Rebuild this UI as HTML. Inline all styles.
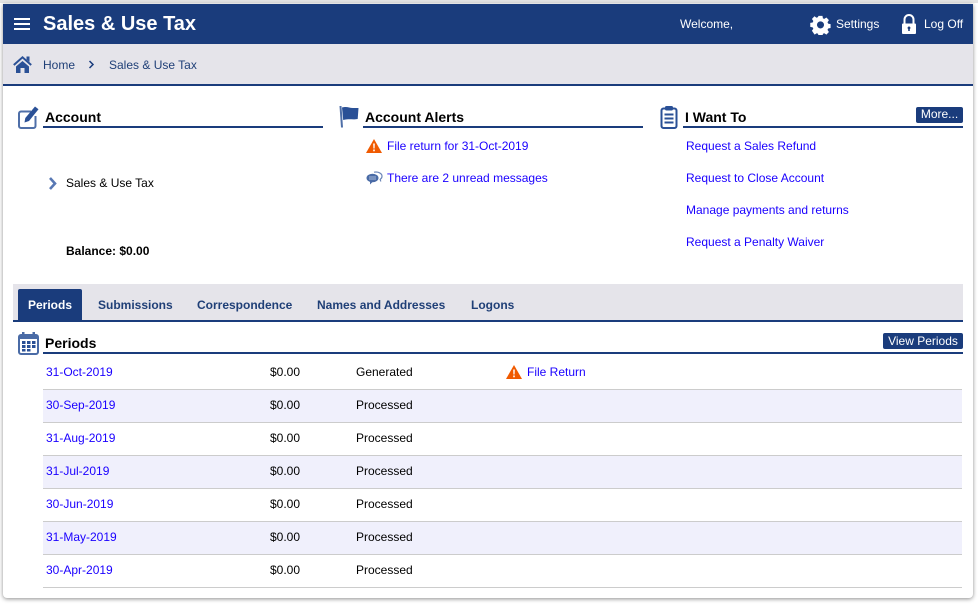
<!DOCTYPE html>
<html><head><meta charset="utf-8"><style>
html,body{margin:0;padding:0;width:978px;height:615px;overflow:hidden;background:#fff;font-family:"Liberation Sans",Arial,sans-serif;font-size:12px;color:#000}
.a{position:absolute;white-space:nowrap;line-height:14px}
a,.l{color:#1a00ff;text-decoration:none}
.b{position:absolute;background:#1a3c7c}
.h{font-size:14px;font-weight:bold;line-height:16px;position:absolute;white-space:nowrap}
.btn{position:absolute;background:#1a3c7c;color:#fff;border-radius:2px;line-height:16px;height:16px;text-align:center}
.row{position:absolute;left:43px;width:919px;height:32px;border-bottom:1px solid #ccc}
.tab{position:absolute;top:298px;font-weight:bold;color:#1f3f77;line-height:14px;white-space:nowrap}
svg{position:absolute}
</style></head><body>
<div style="position:absolute;left:0;top:0;width:978px;height:3px;background:#e4e4e4"></div>
<div style="position:absolute;left:3px;top:4px;width:970px;height:594px;background:#fff;border-radius:0 0 4px 4px;box-shadow:0 1px 4px rgba(0,0,0,.45)"></div>

<div class="b" style="left:3px;top:4px;width:970px;height:40px"></div>
<div style="position:absolute;left:3px;top:44px;width:970px;height:40px;background:#e5e4ea"></div>
<div class="b" style="left:3px;top:84px;width:970px;height:2px"></div>

<div style="position:absolute;left:14px;top:18px;width:16px;height:2px;background:#fff"></div>
<div style="position:absolute;left:14px;top:23px;width:16px;height:2px;background:#fff"></div>
<div style="position:absolute;left:14px;top:28px;width:16px;height:2px;background:#fff"></div>
<div class="a" style="left:43px;top:12px;font-size:20px;font-weight:bold;color:#fff;line-height:24px">Sales &amp; Use Tax</div>
<div class="a" style="left:680px;top:17px;color:#fff">Welcome,</div>
<svg style="left:810px;top:14px" width="21" height="21" viewBox="0 0 24 24"><path fill="#fff" fill-rule="evenodd" d="M9.500 1h5l.6 3.200 1.700.7 2.700-1.800 3.200 3.400-1.800 2.600.8 1.800 3.100.6v5l-3.100.6-.8 1.800 1.800 2.600-3.200 3.400-2.700-1.800-1.700.7-.6 3.200h-5l-.6-3.200-1.700-.7-2.700 1.800L1.100 20l1.800-2.600-.8-1.800L-1 15v-5l3.100-.6.800-1.800L1.100 5l3.200-3.400L7 3.400l1.700-.7zM12 8a4.500 4.500 0 1 0 0 9 4.500 4.500 0 0 0 0-9z" transform="translate(1.200 1.200) scale(.9)"/></svg>
<div class="a" style="left:836px;top:17px;color:#fff">Settings</div>
<svg style="left:901px;top:14px" width="16" height="20" viewBox="0 0 16 20"><path fill="none" stroke="#fff" stroke-width="2" d="M3.500 10V5.500a4.500 4.500 0 0 1 9 0V10"/><path fill="#fff" fill-rule="evenodd" d="M2 9.500h12a1 1 0 0 1 1 1V19a1 1 0 0 1-1 1H2a1 1 0 0 1-1-1v-8.500a1 1 0 0 1 1-1zM8 12.500a1.400 1.400 0 0 0-.8 2.600V17h1.600v-1.900A1.400 1.400 0 0 0 8 12.500z"/></svg>
<div class="a" style="left:924px;top:17px;color:#fff">Log Off</div>

<svg style="left:13px;top:55px" width="19" height="19" viewBox="0 0 19 19"><path fill="none" stroke="#2a5096" stroke-width="2" d="M.8 10 9.500 2.300 18.200 10"/><path fill="#2a5096" d="M13.500 1.500h3V7l-3-2.500z"/><path fill="#2a5096" d="M3 11.500 9.500 6l6.500 5.500V18h-4.500v-5h-4v5H3z"/></svg>
<div class="a" style="left:43px;top:58px;color:#1f3f77">Home</div>
<svg style="left:88px;top:60px" width="7" height="9" viewBox="0 0 7 9"><path fill="none" stroke="#1a3c7c" stroke-width="1.500" d="M1.500 1 5 4.500 1.500 8"/></svg>
<div class="a" style="left:109px;top:58px;color:#1f3f77">Sales &amp; Use Tax</div>

<svg style="left:17px;top:104px" width="23" height="25" viewBox="0 0 23 25"><path fill="none" stroke="#4f6fa8" stroke-width="2" d="M14 7.500H4a2 2 0 0 0-2 2V22a2 2 0 0 0 2 2h12.500a2 2 0 0 0 2-2V12"/><path fill="#2a5096" d="M18 2.500l3.500 2.800-9.500 11.700-4.500 1.500.8-4.500z"/></svg>
<div class="h" style="left:45px;top:109px">Account</div>
<div class="b" style="left:43px;top:126px;width:280px;height:2px"></div>

<svg style="left:339px;top:105px" width="21" height="24" viewBox="0 0 21 24"><path fill="#4f6fa8" d="M.5 1h2l1.500 21.500H2z"/><path fill="#2a5096" d="M3 2.500c5-1.500 7 .5 11 .5h5.500l-.8 11c-5 1-8-.5-14.500 1z"/></svg>
<div class="h" style="left:365px;top:109px">Account Alerts</div>
<div class="b" style="left:363px;top:126px;width:280px;height:2px"></div>
<svg style="left:366px;top:139px" width="16" height="14" viewBox="0 0 16 14"><path fill="#f05a00" d="M8 0 16 14H0z"/><path fill="#fff" d="M7.200 4.500h1.600l-.2 5H7.400zM7.200 10.500h1.600v1.700H7.200z"/></svg>
<a class="a" style="left:387px;top:139px">File return for 31-Oct-2019</a>
<svg style="left:366px;top:171px" width="17" height="14" viewBox="0 0 17 14"><path fill="none" stroke="#6d87b8" stroke-width="1.200" d="M8 1.200c4-.8 8 1 8 4 0 1.500-.8 2.500-1.800 3.200l.6 2.100"/><ellipse cx="6.500" cy="7" rx="6" ry="4.300" fill="#4a6ba6"/><path fill="#4a6ba6" d="M4 10l0 3.500 3-3z"/><path stroke="#a9bbd8" stroke-width="1" d="M3 6h7M3 8h7"/></svg>
<a class="a" style="left:387px;top:171px">There are 2 unread messages</a>

<svg style="left:660px;top:105px" width="18" height="24" viewBox="0 0 18 24"><rect x="1.500" y="3.500" width="15" height="19.500" rx="2" fill="none" stroke="#2a5096" stroke-width="2"/><rect x="5" y="1" width="8" height="4.500" rx="1.500" fill="#2a5096"/><path stroke="#2a5096" stroke-width="2" d="M4.500 9.500h9M4.500 13.500h9M4.500 17.500h9"/></svg>
<div class="h" style="left:685px;top:109px">I Want To</div>
<div class="b" style="left:683px;top:126px;width:280px;height:2px"></div>
<div class="btn" style="left:916px;top:107px;width:47px;color:#fff;line-height:15px">More...</div>
<a class="a" style="left:686px;top:139px">Request a Sales Refund</a>
<a class="a" style="left:686px;top:171px">Request to Close Account</a>
<a class="a" style="left:686px;top:203px">Manage payments and returns</a>
<a class="a" style="left:686px;top:235px">Request a Penalty Waiver</a>

<svg style="left:48px;top:177px" width="10" height="13" viewBox="0 0 10 13"><path fill="none" stroke="#5878b4" stroke-width="2.600" d="M2 1l5 5.500L2 12"/></svg>
<div class="a" style="left:66px;top:176px">Sales &amp; Use Tax</div>
<div class="a" style="left:66px;top:244px;font-weight:bold">Balance: $0.00</div>

<div style="position:absolute;left:13px;top:284px;width:950px;height:36px;background:#e5e4ea"></div>
<div class="b" style="left:13px;top:320px;width:950px;height:2px"></div>
<div class="b" style="left:18px;top:289px;width:64px;height:31px;border-radius:2px 2px 0 0"></div>
<div class="tab" style="left:28px;color:#fff">Periods</div>
<div class="tab" style="left:98px">Submissions</div>
<div class="tab" style="left:197px">Correspondence</div>
<div class="tab" style="left:317px">Names and Addresses</div>
<div class="tab" style="left:471px">Logons</div>

<svg style="left:17px;top:331px" width="23" height="24" viewBox="0 0 23 24"><rect x="2" y="4" width="19" height="19" rx="2" fill="none" stroke="#4a6ba6" stroke-width="2"/><rect x="2" y="4" width="19" height="4" fill="#4a6ba6"/><rect x="5" y="1" width="2.500" height="5" fill="#4a6ba6"/><rect x="15.500" y="1" width="2.500" height="5" fill="#4a6ba6"/><g fill="#2a5096"><rect x="5" y="10" width="3.500" height="3"/><rect x="10" y="10" width="3.500" height="3"/><rect x="15" y="10" width="3.500" height="3"/><rect x="5" y="14" width="3.500" height="3"/><rect x="10" y="14" width="3.500" height="3"/><rect x="15" y="14" width="3.500" height="3"/><rect x="5" y="18" width="3.500" height="2.500"/><rect x="10" y="18" width="3.500" height="2.500"/></g></svg>
<div class="h" style="left:45px;top:335px">Periods</div>
<div class="b" style="left:43px;top:352px;width:920px;height:2px"></div>
<div class="btn" style="left:883px;top:333px;width:80px;line-height:16px">View Periods</div>

<div class="row" style="top:357px"></div>
<div class="row" style="top:390px;background:#f0f0fc"></div>
<div class="row" style="top:423px"></div>
<div class="row" style="top:456px;background:#f0f0fc"></div>
<div class="row" style="top:489px"></div>
<div class="row" style="top:522px;background:#f0f0fc"></div>
<div class="row" style="top:555px"></div>

<a class="a" style="left:46px;top:365px">31-Oct-2019</a><div class="a" style="left:270px;top:365px">$0.00</div><div class="a" style="left:356px;top:365px">Generated</div>
<svg style="left:506px;top:365px" width="16" height="14" viewBox="0 0 16 14"><path fill="#f05a00" d="M8 0 16 14H0z"/><path fill="#fff" d="M7.200 4.500h1.600l-.2 5H7.400zM7.200 10.500h1.600v1.700H7.200z"/></svg>
<a class="a" style="left:527px;top:365px">File Return</a>
<a class="a" style="left:46px;top:398px">30-Sep-2019</a><div class="a" style="left:270px;top:398px">$0.00</div><div class="a" style="left:356px;top:398px">Processed</div>
<a class="a" style="left:46px;top:431px">31-Aug-2019</a><div class="a" style="left:270px;top:431px">$0.00</div><div class="a" style="left:356px;top:431px">Processed</div>
<a class="a" style="left:46px;top:464px">31-Jul-2019</a><div class="a" style="left:270px;top:464px">$0.00</div><div class="a" style="left:356px;top:464px">Processed</div>
<a class="a" style="left:46px;top:497px">30-Jun-2019</a><div class="a" style="left:270px;top:497px">$0.00</div><div class="a" style="left:356px;top:497px">Processed</div>
<a class="a" style="left:46px;top:530px">31-May-2019</a><div class="a" style="left:270px;top:530px">$0.00</div><div class="a" style="left:356px;top:530px">Processed</div>
<a class="a" style="left:46px;top:563px">30-Apr-2019</a><div class="a" style="left:270px;top:563px">$0.00</div><div class="a" style="left:356px;top:563px">Processed</div>
</body></html>
